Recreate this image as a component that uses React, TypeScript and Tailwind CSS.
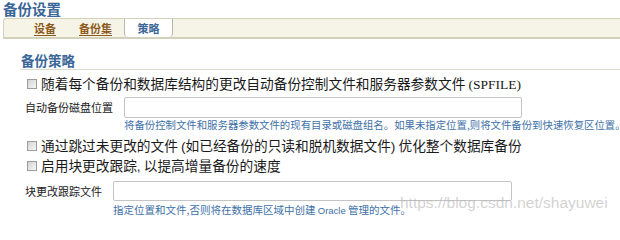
const cjk = "font-['SimSun','Noto_Sans_CJK_SC',sans-serif]";

function Check({ children }: { children: React.ReactNode }) {
  return (
    <div className="flex h-[20px] items-center pl-[27px]">
      <span className="h-[10px] w-[10px] shrink-0 border border-[#9c9c9c] bg-gradient-to-br from-[#d4d4d4] to-[#f6f6f6]" />
      <span className="ml-[4px] whitespace-nowrap text-[13.7px] leading-[20px] text-[#1a1a1a]">{children}</span>
    </div>
  );
}

export default function App() {
  return (
    <div className={`relative h-[220px] w-[620px] overflow-hidden bg-white ${cjk}`}>
      <div className="h-[18px] pl-[3px] text-[14.5px] font-bold leading-[18px] text-[#3b6698]">备份设置</div>

      {/* tab strip */}
      <div className="ml-[3px] flex h-[21px] items-stretch rounded-tl-[3px] border-b-2 border-l border-t border-[#d2d2bc] bg-[#f5f4e6] pl-[30px] text-[11px] font-bold">
        <span className="self-center text-[#8d5a1e] underline underline-offset-2">设备</span>
        <span className="ml-[23px] self-center text-[#8d5a1e] underline underline-offset-2">备份集</span>
        <span className="ml-[12px] flex w-[49px] items-center justify-center rounded-b-[4px] border-x border-[#b8b8a4] bg-white text-[#3b6698]">
          策略
        </span>
      </div>

      <div className="ml-[20px] mt-[13px] h-[18px] border-b border-[#dcdcce] pl-[1px] text-[13.5px] font-bold leading-[17px] text-[#3b6698]">
        备份策略
      </div>

      <div className="mt-[4px]">
        <Check>
          随着每个备份和数据库结构的更改自动备份控制文件和服务器参数文件{" "}
          <span className="font-['Liberation_Serif',serif] text-[13.5px]">(SPFILE)</span>
        </Check>
      </div>

      <div className="mt-[3px] flex h-[21px] items-center">
        <span className="w-[124px] shrink-0 pl-[25px] text-[11px] text-[#222]">自动备份磁盘位置</span>
        <div className="h-[21px] w-[398px] rounded-[2px] border border-[#c4c4c4] bg-white" />
      </div>
      <div className="h-[14px] whitespace-nowrap pl-[124px] text-[10.4px] leading-[14px] text-[#3d70a8]">
        将备份控制文件和服务器参数文件的现有目录或磁盘组名。如果未指定位置,则将文件备份到快速恢复区位置。
      </div>

      <div className="mt-[4px]">
        <Check>
          通过跳过未更改的文件 <span className="font-['Liberation_Sans',sans-serif]">(</span>如已经备份的只读和脱机数据文件
          <span className="font-['Liberation_Sans',sans-serif]">)</span> 优化整个数据库备份
        </Check>
        <Check>
          启用块更改跟踪<span className="font-['Liberation_Sans',sans-serif]">,</span> 以提高增量备份的速度
        </Check>
      </div>

      <div className="mt-[5px] flex h-[20px] items-center">
        <span className="w-[113px] shrink-0 pl-[25px] text-[11px] text-[#222]">块更改跟踪文件</span>
        <div className="h-[20px] w-[399px] rounded-[2px] border border-[#c4c4c4] bg-white" />
      </div>
      <div className="mt-[2px] h-[14px] whitespace-nowrap pl-[113px] text-[10.5px] leading-[14px] text-[#3d70a8]">
        指定位置和文件,否则将在数据库区域中创建{" "}
        <span className="font-['Liberation_Sans',sans-serif] text-[9.5px]">Oracle</span> 管理的文件。
      </div>

      {/* watermark */}
      <div className="pointer-events-none absolute left-[400px] top-[191px] font-['Liberation_Sans',sans-serif] text-[15.5px] text-[#b4b4b4]/60">
        https://blog.csdn.net/shayuwei
      </div>
    </div>
  );
}
